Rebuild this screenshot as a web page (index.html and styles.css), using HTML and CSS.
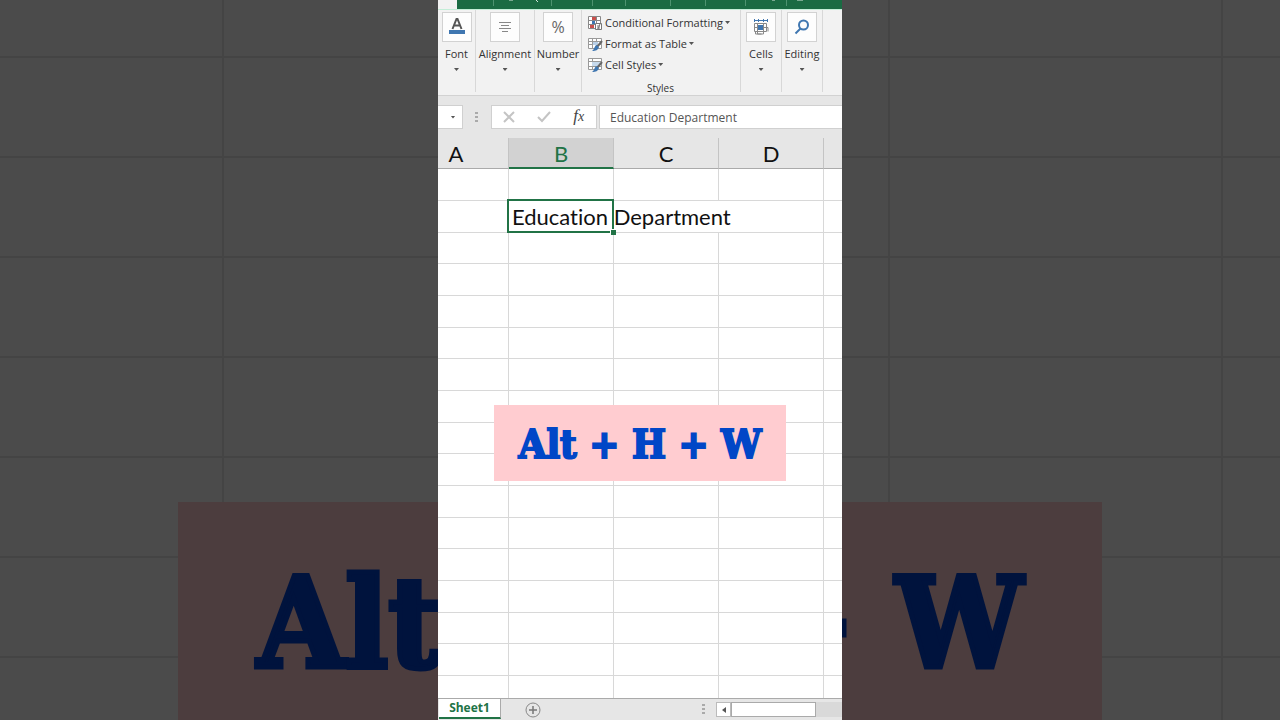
FILE: index.html
```
<!DOCTYPE html>
<html lang="en">
<head>
    <meta charset="UTF-8">
    <meta name="viewport" content="width=device-width, initial-scale=1.0">
    <title>Education Department</title>
    <link rel="stylesheet" href="styles.css">
</head>
<body>
    <!-- Dimmed enlarged sheet behind the window -->
    <div class="backdrop" aria-hidden="true">
        <div class="backdrop-banner">Alt + H + W</div>
    </div>

    <main class="window">
        <div class="tabs-strip">
            <svg width="385" height="9" viewBox="0 0 385 9">
                <path d="M36.500 0v6M94.500 0v6M135.500 0v6M168.500 0v6M213.500 0v6M248.500 0v6M288.500 0v6M329.500 0v6" stroke="#4d9370"/>
                <path d="M52 0h4M79 0l2 2M315 0h3M340 0h6" stroke="#d5e8dd"/>
            </svg>
        </div>

        <div class="ribbon">
            <button type="button" class="group group-font">
                <span class="icon-box">
                    <svg width="18" height="20" viewBox="0 0 18 20">
                        <path d="M4.500 12L8.500 2h1l4 10M6 8.500h6" fill="none" stroke="#555" stroke-width="2"/>
                        <path d="M1 13h16v4H1z" fill="#3f76b0"/>
                    </svg>
                </span>
                <span>Font</span>
                <i class="arrow"></i>
            </button>
            <button type="button" class="group group-align">
                <span class="icon-box">
                    <svg width="14" height="12" viewBox="0 0 14 12">
                        <path d="M1 1.500h12M3 4.500h8M1 7.500h12M4 10.500h6" stroke="#888"/>
                    </svg>
                </span>
                <span>Alignment</span>
                <i class="arrow"></i>
            </button>
            <button type="button" class="group group-number">
                <span class="icon-box percent">%</span>
                <span>Number</span>
                <i class="arrow"></i>
            </button>

            <div class="group-styles">
                <button type="button">
                    <svg width="16" height="16" viewBox="0 0 16 16">
                        <path d="M1.500 1.500h12v12h-12zM5.500 1v13M9.500 1v13M1 5.500h13M1 9.500h13" fill="#fff" stroke="#888"/>
                        <path d="M5 2h4v3H5zM3 10h4v3H3z" fill="#c9504c"/>
                        <path d="M5 6h3v3H5z" fill="#3f76b0"/>
                        <path d="M8.500 8.500h6v6h-6z" fill="#fff" stroke="#777"/>
                        <path d="M10 11h3M10 13h3M13 9l-2 5" stroke="#777"/>
                    </svg>
                    Conditional Formatting <i class="arrow"></i>
                </button>
                <button type="button">
                    <svg width="16" height="16" viewBox="0 0 16 16">
                        <path d="M1.500 2.500h13v10h-13zM5.500 2v10M9.500 2v10M1 5.500h13M1 8.500h13" fill="#fff" stroke="#999"/>
                        <path d="M6 6h5v3H6z" fill="#b9d0e8"/>
                        <path d="M15 5l-5 6" stroke="#666" stroke-width="2"/>
                        <path d="M9 9l3 2c-1 3-3 4-7 4 2-1 2-4 4-6z" fill="#3f76b0"/>
                    </svg>
                    Format as Table <i class="arrow"></i>
                </button>
                <button type="button">
                    <svg width="16" height="16" viewBox="0 0 16 16">
                        <path d="M1.500 1.500h13v11h-13zM5.500 1v11M1 4.500h13M1 9.500h13" fill="#fff" stroke="#999"/>
                        <path d="M5 5h8v4H5z" fill="#c6d9ec"/>
                        <path d="M15 5l-5 6" stroke="#666" stroke-width="2"/>
                        <path d="M9 9l3 2c-1 3-3 4-7 4 2-1 2-4 4-6z" fill="#3f76b0"/>
                    </svg>
                    Cell Styles <i class="arrow"></i>
                </button>
                <div class="group-title">Styles</div>
            </div>

            <button type="button" class="group group-cells">
                <span class="icon-box">
                    <svg width="16" height="18" viewBox="0 0 16 18">
                        <path d="M1.500 1v3M14.500 1v3M2 2.500h12M5.500 1v3M10.500 1v3" stroke="#3f76b0"/>
                        <path d="M1.500 5.500h12v8h-12zM4.500 5v11h6v-2M1 9.500h14v4M10.500 5v9M2.500 13v3h6" fill="none" stroke="#888"/>
                        <path d="M5 7h5v5H5z" fill="#3f76b0"/>
                    </svg>
                </span>
                <span>Cells</span>
                <i class="arrow"></i>
            </button>
            <button type="button" class="group group-editing">
                <span class="icon-box">
                    <svg width="16" height="16" viewBox="0 0 16 16">
                        <circle cx="9.500" cy="6" r="4.500" fill="none" stroke="#3f76b0" stroke-width="2"/>
                        <path d="M6.500 9.500L1.500 14.500" stroke="#3f76b0" stroke-width="2"/>
                    </svg>
                </span>
                <span>Editing</span>
                <i class="arrow"></i>
            </button>
        </div>

        <div class="formula-bar">
            <button type="button" class="name-box" aria-label="Name box"><i class="arrow"></i></button>
            <span class="dots"></span>
            <div class="formula-buttons">
                <button type="button" aria-label="Cancel">
                    <svg width="12" height="12" viewBox="0 0 12 12"><path d="M1 1l10 10M11 1L1 11" stroke="#c4c4c4" stroke-width="2"/></svg>
                </button>
                <button type="button" aria-label="Enter">
                    <svg width="14" height="12" viewBox="0 0 14 12"><path d="M1 6l4 4 8-9" fill="none" stroke="#c4c4c4" stroke-width="2"/></svg>
                </button>
                <button type="button" class="fx" aria-label="Insert function">f<small>x</small></button>
            </div>
            <input type="text" class="formula-input" aria-label="Formula bar" value="Education Department">
        </div>

        <div class="sheet">
            <table>
                <thead>
                    <tr><th class="col-a">A</th><th class="col active">B</th><th class="col">C</th><th class="col">D</th><th></th></tr>
                </thead>
                <tbody>
                    <tr><td></td><td></td><td></td><td></td><td></td></tr>
                    <tr><td></td><td class="selected">Education Department</td><td class="covered"></td><td></td><td></td></tr>
                    <tr><td></td><td></td><td></td><td></td><td></td></tr>
                    <tr><td></td><td></td><td></td><td></td><td></td></tr>
                    <tr><td></td><td></td><td></td><td></td><td></td></tr>
                    <tr><td></td><td></td><td></td><td></td><td></td></tr>
                    <tr><td></td><td></td><td></td><td></td><td></td></tr>
                    <tr><td></td><td></td><td></td><td></td><td></td></tr>
                    <tr><td></td><td></td><td></td><td></td><td></td></tr>
                    <tr><td></td><td></td><td></td><td></td><td></td></tr>
                    <tr><td></td><td></td><td></td><td></td><td></td></tr>
                    <tr><td></td><td></td><td></td><td></td><td></td></tr>
                    <tr><td></td><td></td><td></td><td></td><td></td></tr>
                    <tr><td></td><td></td><td></td><td></td><td></td></tr>
                    <tr><td></td><td></td><td></td><td></td><td></td></tr>
                    <tr><td></td><td></td><td></td><td></td><td></td></tr>
                    <tr><td></td><td></td><td></td><td></td><td></td></tr>
                </tbody>
            </table>
            <div class="banner">Alt + H + W</div>
        </div>

        <div class="sheet-bar">
            <button type="button" class="sheet-tab">Sheet1</button>
            <button type="button" class="add-sheet" aria-label="New sheet">
                <svg width="16" height="16" viewBox="0 0 16 16">
                    <circle cx="8" cy="8" r="7" fill="none" stroke="#888"/>
                    <path d="M8 4v8M4 8h8" stroke="#777" stroke-width="1.500"/>
                </svg>
            </button>
            <span class="dots"></span>
            <div class="scrollbar">
                <button type="button" aria-label="Scroll left">
                    <svg width="4" height="6" viewBox="0 0 4 6"><path d="M4 0v6L0 3z" fill="#555"/></svg>
                </button>
                <span class="thumb"></span>
            </div>
        </div>
    </main>
</body>
</html>
```
FILE: styles.css
```
* {
    box-sizing: border-box;
}
body {
    margin: 0;
    background-color: #4b4b4b;
    font-family: "Open Sans", "Noto Sans", sans-serif;
    font-size: 12px;
    color: #444;
    overflow: hidden;
}
button {
    margin: 0;
    padding: 0;
    border: none;
    background: none;
    font: inherit;
    color: inherit;
    cursor: pointer;
}
svg {
    flex: none;
    display: block;
}

/* Backdrop */
.backdrop {
    position: absolute;
    inset: 0;
    display: flex;
    justify-content: center;
    align-items: flex-end;
    overflow: hidden;
    background-image: linear-gradient(#444 2px, transparent 2px), linear-gradient(90deg, #444 2px, transparent 2px);
    background-size: 100% 100px, 333px 100%;
    background-position: 0 56px, 222px 0;
}
.backdrop-banner {
    flex: none;
    width: 924px;
    height: 218px;
    background-color: #4c3d3e;
    color: #00133d;
    text-align: center;
    white-space: nowrap;
    font: bold 126px/242px "DejaVu Serif Condensed", "DejaVu Serif", serif;
    -webkit-text-stroke: 5px #00133d;
}

/* Window */
.window {
    position: relative;
    display: flex;
    flex-direction: column;
    width: 100%;
    max-width: 404px;
    height: 100vh;
    margin: 0 auto;
    background-color: #e6e6e6;
    overflow: hidden;
}
.tabs-strip {
    flex: none;
    height: 10px;
    padding-left: 19px;
    background-color: #f2f2f2;
    border-bottom: 1px solid #c4eed8;
}
.tabs-strip svg {
    background-color: #1a6b43;
}

/* Ribbon */
.ribbon {
    flex: none;
    display: flex;
    height: 86px;
    padding-bottom: 3px;
    background-color: #f2f2f2;
    border-bottom: 1px solid #d2d2d2;
    font-size: 11px;
    color: #333;
}
.group {
    display: flex;
    flex-direction: column;
    align-items: center;
    gap: 4px;
    padding-top: 2px;
    border-right: 1px solid #d8d8d8;
    line-height: 16px;
    white-space: nowrap;
}
.group-font {
    width: 38px;
}
.group-align {
    width: 59px;
}
.group-number {
    width: 47px;
}
.group-cells, .group-editing {
    width: 41px;
}
.icon-box {
    display: flex;
    justify-content: center;
    align-items: center;
    width: 30px;
    height: 30px;
    background-color: #fdfdfd;
    border: 1px solid #d2d2d2;
}
.percent {
    font-size: 16px;
    color: #666;
}
.arrow {
    flex: none;
    width: 5px;
    height: 3px;
    background-color: #555;
    clip-path: polygon(0 0, 100% 0, 50% 100%);
}
.group .arrow {
    margin-top: 2px;
}
.group-styles {
    display: flex;
    flex-direction: column;
    width: 159px;
    padding: 2px 0 0 5px;
    border-right: 1px solid #d8d8d8;
}
.group-styles button {
    flex: none;
    display: flex;
    align-items: center;
    gap: 2px;
    height: 21px;
    white-space: nowrap;
}
.group-title {
    font-size: 10px;
    line-height: 16px;
    padding: 5px 6px 0 0;
    text-align: center;
}

/* Formula bar */
.formula-bar {
    flex: none;
    display: flex;
    align-items: center;
    height: 42px;
}
.name-box {
    display: flex;
    justify-content: center;
    align-items: center;
    width: 25px;
    height: 24px;
    padding-left: 6px;
    background-color: #fff;
    border: 1px solid #d0d0d0;
    border-left: none;
}
.dots {
    width: 3px;
    height: 11px;
    background: repeating-linear-gradient(#aaa 0, #aaa 2px, transparent 2px, transparent 4px);
}
.formula-bar .dots {
    margin: 0 13px 0 12px;
}
.formula-buttons {
    display: flex;
    width: 106px;
    height: 24px;
    background-color: #fff;
    border: 1px solid #d0d0d0;
}
.formula-buttons button {
    flex: 1;
    display: flex;
    justify-content: center;
    align-items: center;
}
.formula-buttons .fx {
    align-items: baseline;
    font: italic 17px/20px "Liberation Serif", serif;
    color: #444;
}
.fx small {
    font-size: 14px;
}
.formula-input {
    flex: 1;
    min-width: 0;
    height: 24px;
    margin-left: 2px;
    padding: 0 10px;
    border: 1px solid #d0d0d0;
    border-right: none;
    background-color: #fff;
    font: inherit;
    color: #555;
}

/* Sheet */
.sheet {
    flex: 1;
    position: relative;
    min-height: 0;
    overflow: hidden;
    background-color: #fff;
}
table {
    width: 100%;
    table-layout: fixed;
    border-collapse: separate;
    border-spacing: 0;
    font-family: Lato, sans-serif;
    font-size: 22px;
    font-variant-ligatures: none;
    color: #111;
}
th {
    height: 31px;
    padding: 2px 0 0;
    border-right: 1px solid #c4c4c4;
    border-bottom: 1px solid #aaa;
    background-color: #e6e6e6;
    font-weight: normal;
    line-height: 28px;
}
.col-a {
    width: 71px;
    padding-right: 34px;
}
.col {
    width: 105px;
}
th.active {
    background-color: #d2d2d2;
    border-bottom: 2px solid #217346;
    color: #217346;
    line-height: 27px;
}
td {
    height: 32px;
    padding: 0;
    border-right: 1px solid #d8d8d8;
    border-bottom: 1px solid #d8d8d8;
    line-height: 30px;
}
tr:nth-child(3n) td {
    height: 31px;
}
th:last-child, td:last-child, td.covered {
    border-right: none;
}
.selected {
    position: relative;
    padding-left: 3px;
    white-space: nowrap;
}
.selected::before {
    content: "";
    position: absolute;
    inset: -2px -1px -1px -2px;
    border: 2px solid #217346;
}
.selected::after {
    content: "";
    position: absolute;
    right: -3px;
    bottom: -3px;
    width: 5px;
    height: 5px;
    background-color: #217346;
    border: 1px solid #fff;
    border-width: 1px 0 0 1px;
}
.banner {
    position: absolute;
    top: 267px;
    left: 56px;
    right: 56px;
    height: 76px;
    background-color: #ffccd0;
    color: #0046c7;
    text-align: center;
    white-space: nowrap;
    font: bold 40px/78px "DejaVu Serif Condensed", "DejaVu Serif", serif;
    -webkit-text-stroke: 2px #0046c7;
}

/* Sheet bar */
.sheet-bar {
    flex: none;
    display: flex;
    align-items: center;
    height: 22px;
    border-top: 1px solid #aaa;
}
.sheet-tab {
    align-self: flex-start;
    width: 62px;
    height: 20px;
    margin-left: 1px;
    background-color: #fff;
    border-right: 1px solid #aaa;
    border-bottom: 2px solid #217346;
    color: #217346;
    font-weight: bold;
    line-height: 16px;
}
.add-sheet {
    margin-left: 24px;
}
.sheet-bar .dots {
    margin-left: auto;
    margin-right: 11px;
}
.scrollbar {
    display: flex;
    width: 126px;
    height: 15px;
    background-color: #d9d9d9;
}
.scrollbar button {
    display: flex;
    justify-content: center;
    align-items: center;
    width: 15px;
    background-color: #fff;
    border: 1px solid #bbb;
}
.thumb {
    width: 85px;
    background-color: #fff;
    border: 1px solid #aaa;
}
```
